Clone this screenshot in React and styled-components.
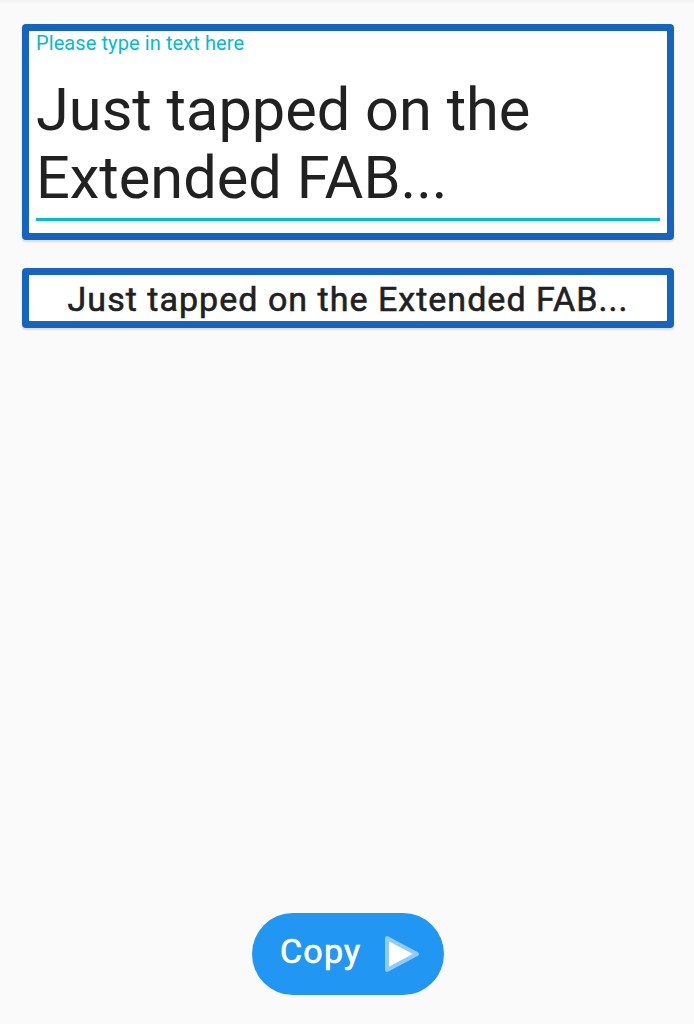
import React from 'react';
import styled, { createGlobalStyle } from 'styled-components';

const GlobalStyle = createGlobalStyle`
  html, body {
    margin: 0;
    padding: 0;
    background: #fafafa;
    font-family: Roboto, "Liberation Sans", sans-serif;
  }
`;

const App = () => (
  <>
    <GlobalStyle />
    <Page>
      <InputCard>
        <FloatingLabel>Please type in text here</FloatingLabel>
        <InputText>Just tapped on the Extended FAB...</InputText>
      </InputCard>
      <OutputCard>Just tapped on the Extended FAB...</OutputCard>
      <Fab>
        <FabLabel>Copy</FabLabel>
        <PlayIcon viewBox="0 0 36 38">
          <path d="M3 3 L33 19 L3 35 Z" fill="#fff" stroke="#90caf9" strokeWidth="4" strokeLinejoin="round" />
        </PlayIcon>
      </Fab>
    </Page>
  </>
);

const Page = styled.div`
  box-sizing: border-box;
  height: 1024px;
  padding: 24px 20px 29px 22px;
  display: flex;
  flex-direction: column;
  overflow: hidden;
  background: linear-gradient(#f2f2f2, #fafafa 4px);
`;
const Card = styled.div`
  box-sizing: border-box;
  background: #fff;
  border: 7px solid #1565c0;
  border-radius: 4px;
  box-shadow: 0 2px 2px rgba(0, 0, 0, 0.12);
  color: #212121;
`;
const InputCard = styled(Card)`
  height: 216px;
  padding: 0 7px;
  display: flex;
  flex-direction: column;
`;
const FloatingLabel = styled.label`
  font-size: 20px;
  letter-spacing: 0.09px;
  line-height: 24px;
  color: #00bcd4;
`;
const InputText = styled.div`
  margin-top: 21px;
  padding-bottom: 6px;
  font-size: 59.5px;
  line-height: 68px;
  border-bottom: 3px solid #00bcd4;
`;
const OutputCard = styled(Card)`
  height: 60px;
  margin-top: 28px;
  font-size: 34px;
  letter-spacing: 1.02px;
  -webkit-text-stroke: 0.6px #212121;
  line-height: 48px;
  text-align: center;
`;
const Fab = styled.button`
  box-sizing: border-box;
  width: 192px;
  height: 82px;
  margin: auto 0 0 230px;
  padding: 0 24px 0 28px;
  display: flex;
  align-items: center;
  justify-content: space-between;
  border: none;
  border-radius: 41px;
  background: #2196f3;
  color: #fff;
  font-family: inherit;
  font-size: 34px;
  letter-spacing: 1.2px;
  -webkit-text-stroke: 0.7px #fff;
`;
const FabLabel = styled.span`
  margin-bottom: 6px;
`;
const PlayIcon = styled.svg`
  width: 36px;
  height: 38px;
`;

export default App;
